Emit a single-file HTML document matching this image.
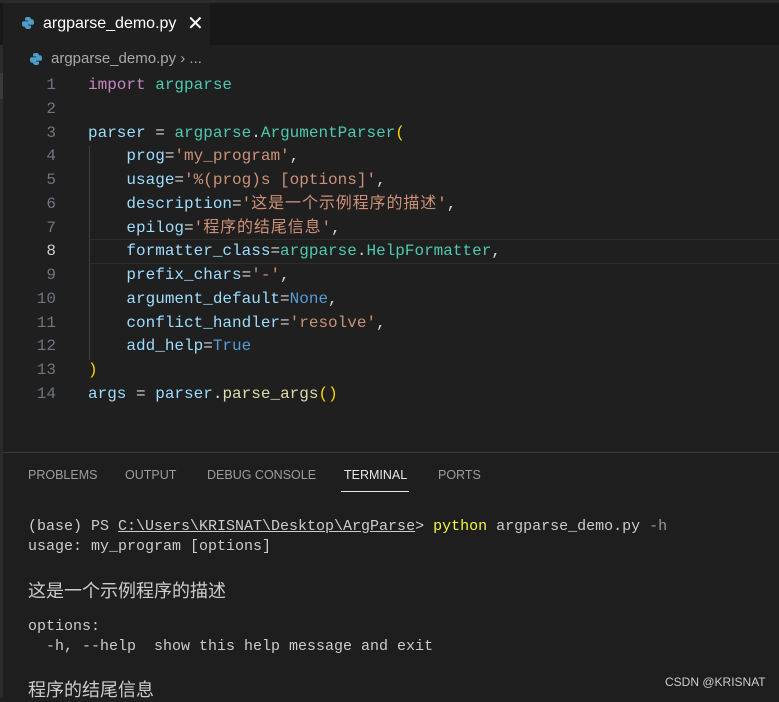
<!DOCTYPE html><html><head><meta charset="utf-8"><style>
body{margin:0;width:779px;height:698px;background:#1f1f1f;overflow:hidden;position:relative;font-family:"Liberation Sans","Noto Sans CJK SC",sans-serif}
.top{position:absolute;left:0;top:0;width:779px;height:3px;background:#2b2b2b}
.tabbar{position:absolute;left:0;top:3px;width:779px;height:42px;background:#181818}
.tab{position:absolute;left:3px;top:0;width:207px;height:42px;background:#1f1f1f;color:#fff;font-size:16px}
.code,.ln{position:absolute;font-family:"Liberation Mono","Noto Sans CJK SC",monospace;font-size:16px;line-height:23.75px;white-space:pre}
.ln{left:20px;width:36px;text-align:right;color:#6e7681;top:74px}
.code{left:88px;top:74px;color:#9cdcfe}
.k{color:#c586c0}.m{color:#4ec9b0}.p{color:#d4d4d4}.s{color:#ce9178}.c{color:#569cd6}.y{color:#ffd700}.f{color:#dcdcaa}
.cj{letter-spacing:0.9px}
.term{position:absolute;left:28px;font-family:"Liberation Mono","Noto Sans CJK SC",monospace;font-size:15px;color:#cccccc;white-space:pre}
.pt{position:absolute;top:468px;font-size:12.5px;color:#9d9d9d}
</style></head><body>
<div class="top"></div>
<div style="position:absolute;left:0;top:3px;width:3px;height:695px;background:#2b2b2b"></div>
<div class="tabbar"><div class="tab">
<svg style="position:absolute;left:18px;top:13px" width="14" height="14" viewBox="0 0 14 14"><path d="M7 1C4 1 4 2 4 3v1.5h3v.7H2.5C1 5.2 1 7 1 8s.5 2.8 2 2.8H4V9.3c0-1 .8-1.800 1.8-1.8h3C10 7.5 10 6.7 10 6V3C10 2 9 1 7 1z" fill="#4e9cc9"/><path d="M7 13c3 0 3-1 3-2V9.5H7v-.7h4.5C13 8.8 13 7 13 6s-.5-2.8-2-2.8h-1v1.5C10 5.7 9.2 6.5 8.2 6.5h-3C4 6.5 4 7.3 4 8v3c0 1 1 2 3 2z" fill="#4e9cc9"/></svg>
<span style="position:absolute;left:40px;top:12px">argparse_demo.py</span>
<span style="position:absolute;left:184px;top:8px;font-size:20px">✕</span></div></div>
<svg style="position:absolute;left:29px;top:52px" width="14" height="14" viewBox="0 0 14 14"><path d="M7 1C4 1 4 2 4 3v1.5h3v.7H2.5C1 5.2 1 7 1 8s.5 2.8 2 2.8H4V9.3c0-1 .8-1.8 1.8-1.8h3C10 7.5 10 6.7 10 6V3C10 2 9 1 7 1z" fill="#4e9cc9"/><path d="M7 13c3 0 3-1 3-2V9.5H7v-.7h4.5C13 8.8 13 7 13 6s-.5-2.8-2-2.8h-1v1.5C10 5.7 9.2 6.5 8.2 6.5h-3C4 6.5 4 7.3 4 8v3c0 1 1 2 3 2z" fill="#4e9cc9"/></svg>
<div style="position:absolute;left:51px;top:50px;color:#a9a9a9;font-size:15px">argparse_demo.py <span style="font-size:15px">›</span> ...</div>
<div style="position:absolute;left:0;top:73px;width:3px;height:26px;background:#3a3a3a"></div>
<div style="position:absolute;left:89px;top:239px;width:690px;height:23px;border-top:1px solid #2c2c2c;border-bottom:1px solid #2c2c2c;border-left:1px solid #2c2c2c"></div>
<div style="position:absolute;left:89px;top:146px;width:1px;height:214px;background:#404040"></div>
<div class="ln">1
2
3
4
5
6
7
<span style="color:#ccc">8</span>
9
10
11
12
13
14</div>
<div class="code"><span class="k">import</span> <span class="m">argparse</span>

parser <span class="p">=</span> <span class="m">argparse</span><span class="p">.</span><span class="m">ArgumentParser</span><span class="y">(</span>
    prog<span class="p">=</span><span class="s">'my_program'</span><span class="p">,</span>
    usage<span class="p">=</span><span class="s">'%(prog)s [options]'</span><span class="p">,</span>
    description<span class="p">=</span><span class="s">'<span class="cj">这是一个示例程序的描述</span>'</span><span class="p">,</span>
    epilog<span class="p">=</span><span class="s">'<span class="cj">程序的结尾信息</span>'</span><span class="p">,</span>
    formatter_class<span class="p">=</span><span class="m">argparse</span><span class="p">.</span><span class="m">HelpFormatter</span><span class="p">,</span>
    prefix_chars<span class="p">=</span><span class="s">'-'</span><span class="p">,</span>
    argument_default<span class="p">=</span><span class="c">None</span><span class="p">,</span>
    conflict_handler<span class="p">=</span><span class="s">'resolve'</span><span class="p">,</span>
    add_help<span class="p">=</span><span class="c">True</span>
<span class="y">)</span>
args <span class="p">=</span> parser<span class="p">.</span><span class="f">parse_args</span><span class="y">()</span></div>
<div style="position:absolute;left:3px;top:452px;width:776px;height:1px;background:#3a3a3a"></div>
<div style="position:absolute;left:3px;top:453px;width:776px;height:245px;background:#1e1e1e"></div>
<div class="pt" style="left:28px">PROBLEMS</div>
<div class="pt" style="left:125px">OUTPUT</div>
<div class="pt" style="left:207px">DEBUG CONSOLE</div>
<div class="pt" style="left:344px;color:#e7e7e7">TERMINAL</div>
<div style="position:absolute;left:341px;top:491px;width:68px;height:1px;background:#e7e7e7"></div>
<div class="pt" style="left:438px">PORTS</div>
<div class="term" style="top:518px">(base) PS <u>C:\Users\KRISNAT\Desktop\ArgParse</u>&gt; <span style="color:#f5f543">python</span> argparse_demo.py <span style="color:#999">-h</span></div>
<div class="term" style="top:538px">usage: my_program [options]</div>
<div class="term" style="top:577px;font-family:'Noto Sans CJK SC',sans-serif;font-size:18px">这是一个示例程序的描述</div>
<div class="term" style="top:618px">options:</div>
<div class="term" style="top:638px">  -h, --help  show this help message and exit</div>
<div class="term" style="top:676px;font-family:'Noto Sans CJK SC',sans-serif;font-size:18px">程序的结尾信息</div>
<div style="position:absolute;left:665px;top:675px;font-size:12px;color:#ccc">CSDN @KRISNAT</div>
</body></html>
